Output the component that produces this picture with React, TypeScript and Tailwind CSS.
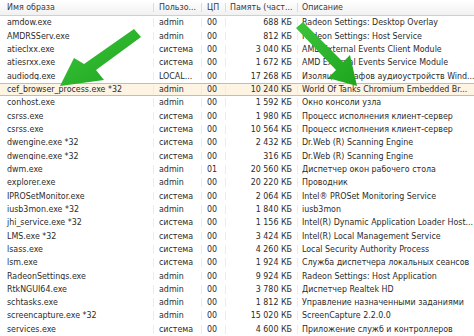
import React from "react";

type Row = [string, string, string, string, string];

const rows: Row[] = [
  ["amdow.exe", "admin", "00", "688 КБ", "Radeon Settings: Desktop Overlay"],
  ["AMDRSServ.exe", "admin", "00", "812 КБ", "Radeon Settings: Host Service"],
  ["atieclxx.exe", "система", "00", "3 040 КБ", "AMD External Events Client Module"],
  ["atiesrxx.exe", "система", "00", "1 672 КБ", "AMD External Events Service Module"],
  ["audiodg.exe", "LOCAL...", "00", "17 268 КБ", "Изоляция графов аудиоустройств Wind..."],
  ["cef_browser_process.exe *32", "admin", "00", "10 240 КБ", "World Of Tanks Chromium Embedded Br..."],
  ["conhost.exe", "admin", "00", "1 592 КБ", "Окно консоли узла"],
  ["csrss.exe", "система", "00", "1 980 КБ", "Процесс исполнения клиент-сервер"],
  ["csrss.exe", "система", "00", "10 564 КБ", "Процесс исполнения клиент-сервер"],
  ["dwengine.exe *32", "система", "00", "2 432 КБ", "Dr.Web (R) Scanning Engine"],
  ["dwengine.exe *32", "система", "00", "316 КБ", "Dr.Web (R) Scanning Engine"],
  ["dwm.exe", "admin", "01", "20 560 КБ", "Диспетчер окон рабочего стола"],
  ["explorer.exe", "admin", "00", "20 220 КБ", "Проводник"],
  ["IPROSetMonitor.exe", "система", "00", "2 064 КБ", "Intel® PROSet Monitoring Service"],
  ["iusb3mon.exe *32", "admin", "00", "1 840 КБ", "iusb3mon"],
  ["jhi_service.exe *32", "система", "00", "1 156 КБ", "Intel(R) Dynamic Application Loader Host..."],
  ["LMS.exe *32", "система", "00", "3 424 КБ", "Intel(R) Local Management Service"],
  ["lsass.exe", "система", "00", "4 260 КБ", "Local Security Authority Process"],
  ["lsm.exe", "система", "00", "1 924 КБ", "Служба диспетчера локальных сеансов"],
  ["RadeonSettings.exe", "admin", "00", "9 924 КБ", "Radeon Settings: Host Application"],
  ["RtkNGUI64.exe", "admin", "00", "3 780 КБ", "Диспетчер Realtek HD"],
  ["schtasks.exe", "admin", "00", "1 812 КБ", "Управление назначенными заданиями"],
  ["screencapture.exe *32", "admin", "00", "15 020 КБ", "ScreenCapture 2.2.0.0"],
  ["services.exe", "система", "00", "4 600 КБ", "Приложение служб и контроллеров"],
];

const SELECTED = 5;

function Cells({ r, header }: { r: Row; header?: boolean }) {
  const line = header ? "border-r border-[#dcdcdc]" : "border-r border-[#ececec]";
  return (
    <>
      <div className={`w-[154px] shrink-0 pl-[7px] whitespace-nowrap overflow-hidden ${line}`}>{r[0]}</div>
      <div className={`w-[48px] shrink-0 pl-[5px] whitespace-nowrap overflow-hidden ${line}`}>{r[1]}</div>
      <div className={`w-[24px] shrink-0 pl-[5px] whitespace-nowrap ${line}`}>{r[2]}</div>
      <div
        className={`w-[72px] shrink-0 whitespace-nowrap overflow-hidden ${
          header ? "text-left pl-[4px]" : "text-right pr-[5px]"
        } ${line}`}
      >
        {r[3]}
      </div>
      <div className="flex-1 pl-[4px] whitespace-nowrap">{r[4]}</div>
    </>
  );
}

function Arrows() {
  return (
    <svg className="absolute inset-0 pointer-events-none" width="474" height="336" viewBox="0 0 474 336">
      <defs>
        <linearGradient id="g" x1="0" y1="0" x2="1" y2="1">
          <stop offset="0" stopColor="#3cc43c" />
          <stop offset="1" stopColor="#1ea51e" />
        </linearGradient>
      </defs>
      <polygon points="134,29 141,37 96,70 104,80 60,86 74,58 84,64" fill="url(#g)" />
      <polygon points="296,28 303,22 343,62 350,55 357,86 328,78 336,70" fill="url(#g)" />
    </svg>
  );
}

export default function App() {
  return (
    <div
      className="relative w-[474px] h-[336px] overflow-hidden bg-white text-[#2b2b2b] text-[8.8px] leading-none"
      style={{ fontFamily: "Tahoma, 'DejaVu Sans Condensed', 'Liberation Sans Narrow', sans-serif" }}
    >
      <div className="flex items-center h-[16px] bg-gradient-to-b from-[#ffffff] to-[#f1f1f1] border-b border-[#d0d0d0] text-[#3a3a3a]">
        <Cells r={["Имя образа", "Пользо...", "ЦП", "Память (част...", "Описание"]} header />
      </div>
      {rows.map((r, i) => (
        <div
          key={i}
          className={`flex items-center h-[13.33px] ${
            i === SELECTED ? "bg-[#fdf4e3] border-y border-[#bdbdbd]" : ""
          }`}
        >
          <Cells r={r} />
        </div>
      ))}
      <Arrows />
    </div>
  );
}
